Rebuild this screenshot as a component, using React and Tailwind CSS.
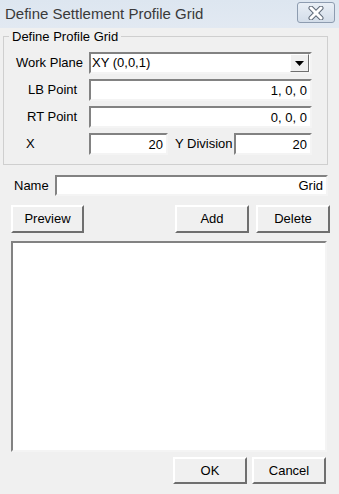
import React from "react";

const font = { fontFamily: '"Liberation Sans", Arial, sans-serif' };

function Sunken({ className = "", children }) {
  return (
    <div
      className={
        "bg-white border-2 border-t-[#828282] border-l-[#828282] border-b-[#f4f4f4] border-r-[#f4f4f4] flex items-center justify-end pr-[3px] text-[13px] leading-none text-black " +
        className
      }
    >
      {children}
    </div>
  );
}

function Btn({ className = "", children }) {
  return (
    <div
      className={
        "bg-[#f0f0f0] border-2 border-t-white border-l-white border-b-[#6f6f6f] border-r-[#6f6f6f] flex items-center justify-center text-[13px] text-black " +
        className
      }
    >
      {children}
    </div>
  );
}

export default function App() {
  return (
    <div
      className="w-[339px] h-[494px] overflow-hidden bg-[#f0f0f0] flex flex-col text-black"
      style={font}
    >
      {/* Title bar */}
      <div className="h-[28px] shrink-0 bg-gradient-to-b from-[#dde6f0] to-[#e2e9f2] flex items-start justify-between pl-[5px] pr-[4px]">
        <div className="text-[15px] leading-[28px] text-[#3a3a3a]">
          Define Settlement Profile Grid
        </div>
        <div className="mt-[2px] w-[38px] h-[21px] rounded-[3px] border border-[#8d9cb0] bg-gradient-to-b from-[#e9eff6] to-[#d3dde9] flex items-center justify-center">
          <svg width="18" height="14" viewBox="0 0 18 14">
            <path d="M4 2 L14 12 M14 2 L4 12" stroke="#5f6a78" strokeWidth="5" strokeLinecap="round" />
            <path d="M4 2 L14 12 M14 2 L4 12" stroke="#ffffff" strokeWidth="3" strokeLinecap="round" />
          </svg>
        </div>
      </div>

      {/* Body */}
      <div className="flex flex-col pl-[3px]">
        <fieldset className="w-[325px] mt-[1px] border border-[#cfcfcf] pt-[8px] pb-[9px]">
          <legend className="ml-[5px] px-[3px] text-[13px] leading-[15px]">
            Define Profile Grid
          </legend>
          <div className="flex flex-col gap-[5px]">
            <div className="flex items-center h-[22px]">
              <div className="w-[85px] pl-[12px] text-[13px] whitespace-nowrap">Work Plane</div>
              <div className="w-[223px] h-[22px] bg-white border-2 border-t-[#828282] border-l-[#828282] border-b-[#f4f4f4] border-r-[#f4f4f4] flex items-center justify-between">
                <span className="pl-[1px] text-[13px]">XY (0,0,1)</span>
                <div className="w-[19px] h-[18px] mr-[1px] bg-[#f0f0f0] border border-t-white border-l-white border-b-[#6f6f6f] border-r-[#6f6f6f] flex items-center justify-center">
                  <svg width="9" height="5" viewBox="0 0 9 5">
                    <path d="M0 0 H9 L4.5 5 Z" fill="#000" />
                  </svg>
                </div>
              </div>
            </div>
            <div className="flex items-center h-[22px]">
              <div className="w-[85px] pl-[24px] text-[13px] whitespace-nowrap">LB Point</div>
              <Sunken className="w-[223px] h-[22px]">1, 0, 0</Sunken>
            </div>
            <div className="flex items-center h-[22px]">
              <div className="w-[85px] pl-[23px] text-[13px] whitespace-nowrap">RT Point</div>
              <Sunken className="w-[223px] h-[22px]">0, 0, 0</Sunken>
            </div>
            <div className="flex items-center h-[22px]">
              <div className="w-[85px] pl-[22px] text-[13px]">X</div>
              <Sunken className="w-[79px] h-[22px]">20</Sunken>
              <div className="w-[66px] shrink-0 pl-[7px] text-[13px] whitespace-nowrap">Y Division</div>
              <Sunken className="w-[78px] h-[22px]">20</Sunken>
            </div>
          </div>
        </fieldset>

        <div className="flex items-center mt-[10px] h-[21px]">
          <div className="w-[52px] pl-[11px] text-[13px]">Name</div>
          <Sunken className="w-[273px] h-[21px]">Grid</Sunken>
        </div>

        <div className="flex items-center mt-[9px] h-[28px]">
          <Btn className="ml-[8px] w-[73px] h-[28px]">Preview</Btn>
          <Btn className="ml-[91px] w-[74px] h-[28px]">Add</Btn>
          <Btn className="ml-[7px] w-[74px] h-[28px]">Delete</Btn>
        </div>

        <div className="ml-[8px] mt-[8px] w-[316px] h-[211px] bg-white border-2 border-t-[#828282] border-l-[#828282] border-b-[#f4f4f4] border-r-[#f4f4f4]" />

        <div className="flex items-center mt-[5px] h-[27px]">
          <Btn className="ml-[170px] w-[74px] h-[27px]">OK</Btn>
          <Btn className="ml-[5px] w-[74px] h-[27px]">Cancel</Btn>
        </div>
      </div>
    </div>
  );
}
